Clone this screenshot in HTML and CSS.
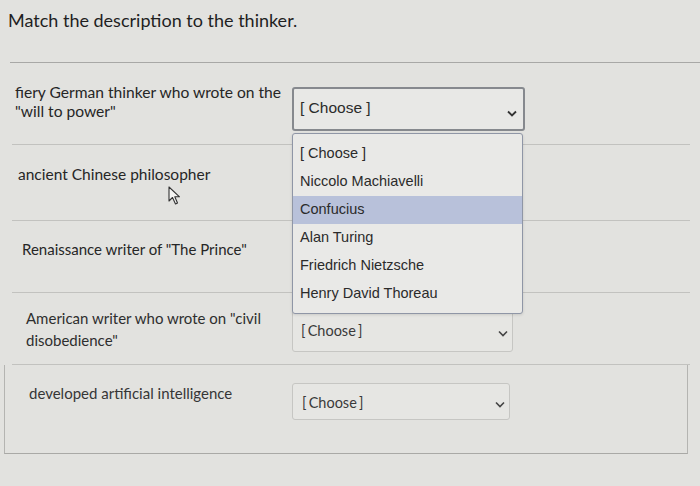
FILE: index.html
```html
<!DOCTYPE html>
<html lang="en">
<head>
<meta charset="utf-8">
<title>Match the description to the thinker.</title>
<link rel="stylesheet" href="styles.css">
</head>
<body>
<h1 class="title">Match the description to the thinker.</h1>
<div class="rule"></div>
<div class="question">
  <div class="row row-1">
    <div class="desc">fiery German thinker who wrote on the<br>"will to power"</div>
    <div class="answer">
      <div class="select select-open">
        <span class="select-label">[ Choose ]</span>
        <svg class="chev" width="10" height="7" viewBox="0 0 10 7"><path d="M1 1.5 L5 5.5 L9 1.5" fill="none" stroke="#333" stroke-width="1.8"/></svg>
      </div>
      <ul class="options">
        <li>[ Choose ]</li>
        <li>Niccolo Machiavelli</li>
        <li class="hl">Confucius</li>
        <li>Alan Turing</li>
        <li>Friedrich Nietzsche</li>
        <li>Henry David Thoreau</li>
      </ul>
    </div>
  </div>
  <div class="row row-2">
    <div class="desc">ancient Chinese philosopher</div>
    <div class="answer"></div>
    <svg class="cursor" width="14" height="20" viewBox="0 0 14 20"><path d="M1 1 L1 15 L4.5 11.5 L7.5 18 L9.5 17 L6.8 10.8 L11.5 10.8 Z" fill="#f4f4f2" stroke="#333" stroke-width="1.1" stroke-linejoin="round"/></svg>
  </div>
  <div class="row row-3">
    <div class="desc">Renaissance writer of "The Prince"</div>
    <div class="answer"></div>
  </div>
  <div class="row row-4">
    <div class="desc">American writer who wrote on "civil<br>disobedience"</div>
    <div class="answer">
      <div class="select select-4">
        <span class="select-label">[ Choose ]</span>
        <svg class="chev" width="10" height="7" viewBox="0 0 10 7"><path d="M1 1.5 L5 5.5 L9 1.5" fill="none" stroke="#444" stroke-width="1.6"/></svg>
      </div>
    </div>
  </div>
  <div class="row row-5">
    <div class="desc">developed artificial intelligence</div>
    <div class="answer">
      <div class="select select-5">
        <span class="select-label">[ Choose ]</span>
        <svg class="chev" width="10" height="7" viewBox="0 0 10 7"><path d="M1 1.5 L5 5.5 L9 1.5" fill="none" stroke="#444" stroke-width="1.6"/></svg>
      </div>
    </div>
  </div>
</div>
</body>
</html>
```
FILE: styles.css
```css
html, body {
  margin: 0;
  padding: 0;
}
body {
  background: #e2e2df;
  font-family: Lato, "Open Sans", sans-serif;
  color: #262626;
  width: 700px;
  height: 486px;
  overflow: hidden;
}
.title {
  margin: 0;
  padding: 8px 0 0 8px;
  font-size: 18px;
  line-height: 24px;
  font-weight: 400;
  color: #1f1f1f;
}
.rule {
  margin: 30px 0 0 10px;
  height: 0;
  border-top: 1px solid #a8a8a6;
}
.question {
  margin: 0 10px 0 12px;
}
.row {
  position: relative;
  display: grid;
  grid-template-columns: 280px 1fr;
  box-sizing: border-box;
  border-bottom: 1px solid #c2c2bf;
}
.desc {
  font-size: 15px;
  line-height: 19px;
  color: #262626;
}
.answer {
  position: relative;
}
.row-1 { height: 82px; }
.row-1 .desc { padding: 20px 0 0 3px; font-size: 15.6px; }
.row-1 .answer { padding-top: 24px; }
.row-2 { height: 76px; }
.row-2 .desc { padding: 19px 0 0 6px; line-height: 20px; font-size: 15.5px; }
.row-3 { height: 72px; }
.row-3 .desc { padding: 18px 0 0 10px; line-height: 20px; }
.row-4 { height: 72px; }
.row-4 .desc { padding: 14px 0 0 14px; line-height: 22px; color: #2e2e2e; }
.row-4 .answer { padding-top: 17px; }
.row-5 {
  height: 89px;
  margin-left: -8px;
  margin-right: 2px;
  border-left: 1px solid #b4b4b1;
  border-right: 1px solid #b4b4b1;
  border-bottom: 1px solid #a9a9a6;
  grid-template-columns: 287px 1fr;
}
.row-5 .desc { padding: 18px 0 0 24px; line-height: 20px; color: #363636; }
.row-5 .answer { padding-top: 18px; }

.select {
  box-sizing: border-box;
  display: flex;
  align-items: center;
  justify-content: space-between;
  width: 233px;
  height: 44px;
  padding: 0 4px 0 6px;
  border: 1px solid #c6c6c3;
  border-radius: 3px;
  background: #e6e6e3;
}
.select-open {
  border: 2px solid #86898e;
  background: #e8e8e6;
  padding-right: 6px;
}
.select-open .select-label {
  font-family: "Liberation Sans", Arial, sans-serif;
  font-size: 15.5px;
  color: #2b2b2b;
  margin-top: -3px;
}
.select-open .chev { margin-top: 8px; }
.select-4 {
  width: 221px;
  height: 42px;
}
.select-5 {
  width: 218px;
  height: 37px;
}
.select-label {
  font-size: 14.5px;
  color: #3a3a3a;
}
.select-4 .select-label,
.select-5 .select-label {
  word-spacing: -1.5px;
}
.select-4 .select-label { margin-top: -2px; padding-left: 2px; }
.select-5 .select-label { margin-top: 2px; padding-left: 3px; }
.select-4 .chev { margin-top: 4px; }
.select-5 .chev { margin-top: 6px; }

.options {
  position: absolute;
  top: 70px;
  left: 0;
  box-sizing: border-box;
  width: 231px;
  margin: 0;
  padding: 6px 0 5px;
  list-style: none;
  background: #e9e9e7;
  border: 1px solid #8f96a6;
  border-radius: 3px;
  box-shadow: 0 1px 3px rgba(0,0,0,0.12);
  z-index: 2;
}
.options li {
  height: 28px;
  line-height: 27px;
  padding-left: 7px;
  font-family: "Liberation Sans", Arial, sans-serif;
  font-size: 14.5px;
  color: #2b2b2b;
}
.options li.hl {
  background: #b8c1da;
}
.cursor {
  position: absolute;
  left: 156px;
  top: 41px;
}
```
